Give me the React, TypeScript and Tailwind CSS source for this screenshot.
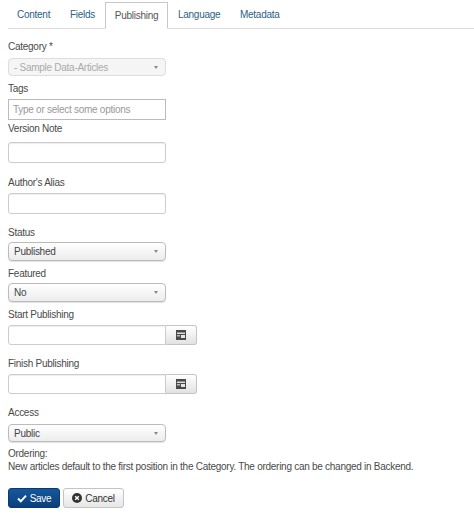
const tabs = ["Content", "Fields", "Publishing", "Language", "Metadata"];

const Caret = () => (
  <span className="ml-auto mr-[7px] h-0 w-0 border-x-[2.5px] border-t-[3px] border-x-transparent border-t-[#888]" />
);

const Select = ({ value, className }: { value: string; className: string }) => (
  <div className={`flex w-[158px] items-center rounded-[4px] border border-[#bbb] bg-gradient-to-b from-white to-[#ececec] pl-[5px] text-[#444] shadow-[0_1px_1px_rgba(0,0,0,0.12)] ${className}`}>
    {value}
    <Caret />
  </div>
);

const TextInput = () => (
  <div className="h-[21px] w-[158px] rounded-[3px] border border-[#ccc] bg-white shadow-[inset_0_1px_1px_rgba(0,0,0,0.07)]" />
);

const DateInput = ({ className }: { className: string }) => (
  <div className={`flex h-[20px] w-[189px] ${className}`}>
    <div className="w-[158px] rounded-l-[3px] border border-[#ccc] bg-white shadow-[inset_0_1px_1px_rgba(0,0,0,0.07)]" />
    <div className="flex w-[31px] items-center justify-center rounded-r-[3px] border border-l-0 border-[#c4c4c4] bg-gradient-to-b from-white to-[#e2e2e2]">
      <svg width="10" height="10" viewBox="0 0 10 10">
        <rect width="10" height="10" fill="#4a4a4a" />
        <rect x="1" y="2.5" width="8" height="1.5" fill="#ddd" />
        <rect x="1" y="5" width="3" height="1.5" fill="#bbb" />
        <rect x="5" y="5" width="4" height="3" fill="#e5e5e5" />
      </svg>
    </div>
  </div>
);

export default function App() {
  return (
    <div className="h-[517px] w-[474px] overflow-hidden bg-white font-['Liberation_Sans',Arial,sans-serif] text-[10px] tracking-[-0.27px] text-[#4a4a4a]">
      <div className="ml-[8px] flex h-[29px] items-end border-b border-[#ddd]">
        {tabs.map((tab) =>
          tab === "Publishing" ? (
            <div key={tab} className="mb-[-1px] flex h-[27px] w-[63px] items-center justify-center border border-b-white border-[#c8c8c8] bg-white text-[#555]">
              {tab}
            </div>
          ) : (
            <div key={tab} className={`flex h-[27px] items-center text-[#2c5f87] ${tab === "Content" ? "ml-[9px] w-[53px]" : tab === "Fields" ? "w-[35px]" : tab === "Language" ? "ml-[10px] w-[62px]" : "w-[50px]"}`}>
              {tab}
            </div>
          ),
        )}
      </div>

      <div className="flex flex-col pl-[8px]">
        <div className="mt-[12px] h-[12px] leading-[12px]">Category *</div>
        <div className="mt-[5px] flex h-[18px] w-[158px] items-center rounded-[4px] border border-[#ddd] bg-[#f5f5f5] pl-[5px] text-[#aaa]">
          - Sample Data-Articles
          <Caret />
        </div>
        <div className="mt-[7px] h-[12px] leading-[12px]">Tags</div>
        <div className="mt-[4px] flex h-[21px] w-[158px] items-center border border-[#bbb] bg-white pl-[4px] text-[#999]">
          Type or select some options
        </div>
        <div className="mt-[3px] h-[12px] leading-[12px]">Version Note</div>
        <div className="mt-[7px]"><TextInput /></div>
        <div className="mt-[14px] h-[12px] leading-[12px]">Author's Alias</div>
        <div className="mt-[4px]"><TextInput /></div>
        <div className="mt-[13px] h-[12px] leading-[12px]">Status</div>
        <Select value="Published" className="mt-[3px] h-[19px]" />
        <div className="mt-[7px] h-[12px] leading-[12px]">Featured</div>
        <Select value="No" className="mt-[3px] h-[19px]" />
        <div className="mt-[7px] h-[12px] leading-[12px]">Start Publishing</div>
        <DateInput className="mt-[4px]" />
        <div className="mt-[13px] h-[12px] leading-[12px]">Finish Publishing</div>
        <DateInput className="mt-[4px]" />
        <div className="mt-[13px] h-[12px] leading-[12px]">Access</div>
        <Select value="Public" className="mt-[5px] h-[18px]" />
        <div className="mt-[6px] h-[12px] leading-[12px]">Ordering:</div>
        <div className="mt-[1px] h-[12px] leading-[12px]">New articles default to the first position in the Category. The ordering can be changed in Backend.</div>
        <div className="mt-[15px] flex gap-[3px]">
          <div className="flex h-[20px] w-[52px] items-center justify-center gap-[3px] rounded-[3px] border border-[#0a3a6e] bg-gradient-to-b from-[#16589c] to-[#0b3f7c] text-white">
            <svg width="10" height="9" viewBox="0 0 10 9">
              <path d="M1 4.5 L3.8 7.3 L9 1.6" fill="none" stroke="#fff" strokeWidth="2" />
            </svg>
            Save
          </div>
          <div className="flex h-[20px] w-[61px] items-center justify-center gap-[3px] rounded-[3px] border border-[#c4c4c4] bg-gradient-to-b from-white to-[#e6e6e6] text-[#333]">
            <svg width="10" height="10" viewBox="0 0 10 10">
              <circle cx="5" cy="5" r="5" fill="#333" />
              <path d="M3.2 3.2 L6.8 6.8 M6.8 3.2 L3.2 6.8" stroke="#fff" strokeWidth="1.4" />
            </svg>
            Cancel
          </div>
        </div>
      </div>
    </div>
  );
}
